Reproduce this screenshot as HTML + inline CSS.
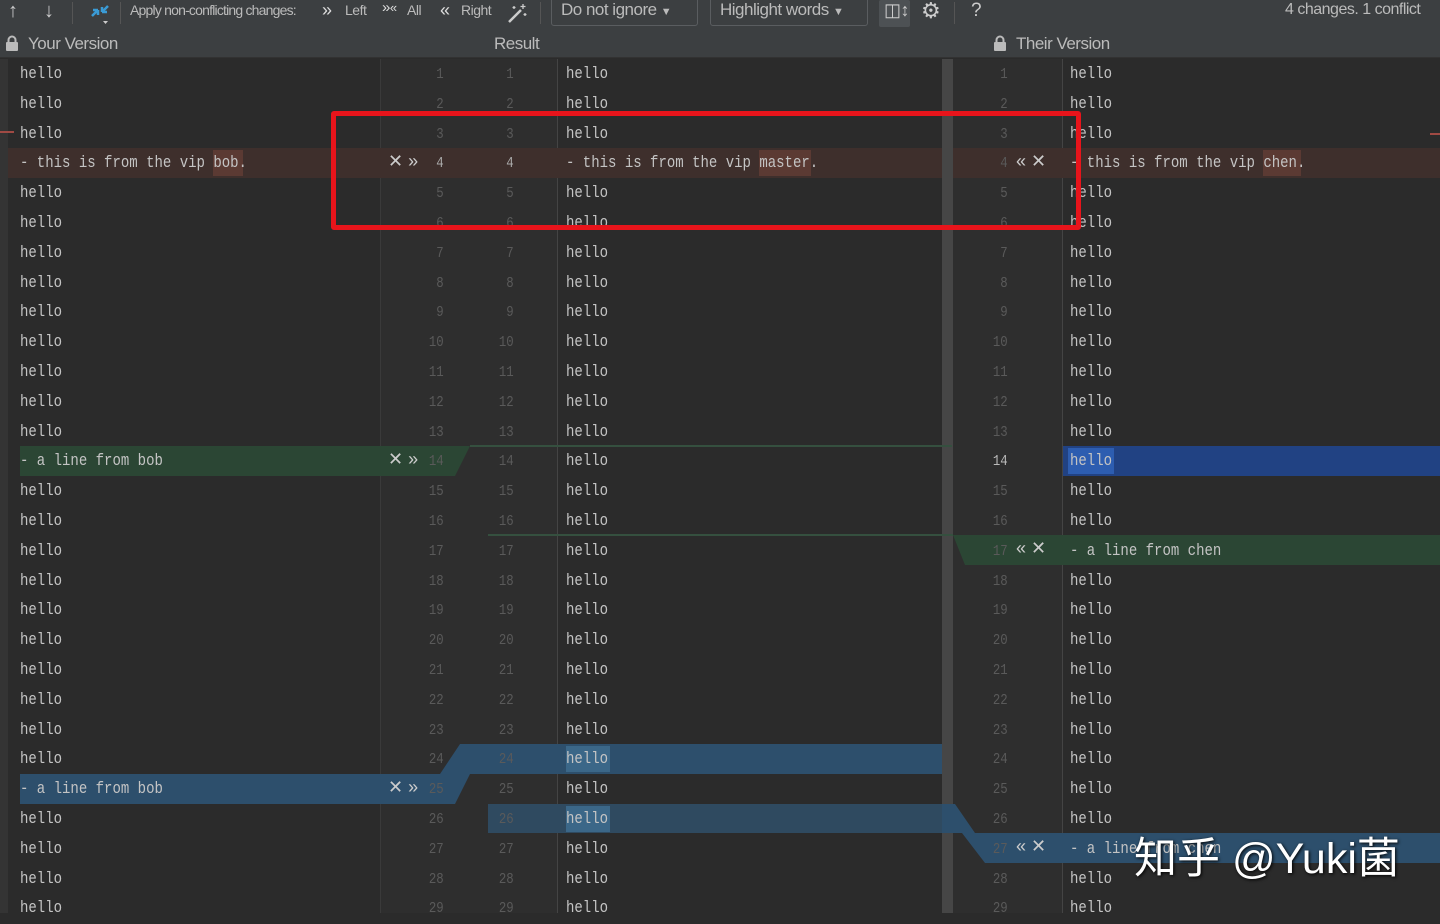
<!DOCTYPE html>
<html><head><meta charset="utf-8"><style>
*{margin:0;padding:0;box-sizing:border-box}
body{width:1440px;height:913px;overflow:hidden;background:#2b2b2b;position:relative;font-family:"Liberation Sans",sans-serif;color:#bbb}
.a{position:absolute}
pre{position:absolute;font-family:"Liberation Mono",monospace;font-size:17px;line-height:29.8px;color:#c4c4c4;margin:0;transform:scaleX(0.824);transform-origin:0 0;white-space:pre}
.n{color:#5a5a5a;text-align:right;font-size:15px}
.tb{font-size:15px;color:#bbb;letter-spacing:-0.5px}
.w{background:#5b3a33}
</style></head><body>
<div class="a" style="left:0;top:0;width:1440px;height:28px;background:#3c3f41"></div>
<div class="a" style="left:0;top:28px;width:1440px;height:30px;background:#3c3f41;border-bottom:1px solid #323232"></div>
<div class="a tb" style="left:8px;top:0;font-size:20px;color:#ccc">↑</div>
<div class="a tb" style="left:44px;top:0;font-size:20px;color:#ccc">↓</div>
<div class="a" style="left:72px;top:2px;width:1px;height:22px;background:#555"></div>
<svg class="a" style="left:88px;top:2px" width="24" height="24"><path d="M4 14 L10 8 M10 8 h-5 M10 8 v5" stroke="#3a9bd5" stroke-width="2.5" fill="none"/><path d="M20 4 L14 10 M14 10 h5 M14 10 v-5" stroke="#3a9bd5" stroke-width="2.5" fill="none"/><path d="M15 19 h5 l-2.5 3z" fill="#ccc"/></svg>
<div class="a" style="left:120px;top:2px;width:1px;height:22px;background:#555"></div>
<div class="a tb" style="left:130px;top:2px;font-size:14px;letter-spacing:-0.8px">Apply non-conflicting changes:</div>
<div class="a tb" style="left:322px;top:0;font-size:18px;color:#ddd">»</div>
<div class="a tb" style="left:345px;top:2px;font-size:14px">Left</div>
<div class="a tb" style="left:382px;top:-1px;font-size:15px;color:#ddd">»<span style="font-size:13px">«</span></div>
<div class="a tb" style="left:407px;top:2px;font-size:14px">All</div>
<div class="a tb" style="left:440px;top:0;font-size:18px;color:#ddd">«</div>
<div class="a tb" style="left:461px;top:2px;font-size:14px">Right</div>
<svg class="a" style="left:506px;top:2px" width="22" height="22"><path d="M3 20 L15 8" stroke="#ccc" stroke-width="2.5"/><path d="M17 2 v5 M14.5 4.5 h5 M8 4 v3 M6.5 5.5 h3 M19 11 v3 M17.5 12.5 h3" stroke="#ccc" stroke-width="1.3"/></svg>
<div class="a" style="left:540px;top:2px;width:1px;height:22px;background:#555"></div>
<div class="a" style="left:551px;top:-4px;width:147px;height:30px;border:1px solid #5a5d60;border-radius:3px"></div>
<div class="a tb" style="left:561px;top:0;font-size:17px">Do not ignore <span style="font-size:11px">▼</span></div>
<div class="a" style="left:710px;top:-4px;width:158px;height:30px;border:1px solid #5a5d60;border-radius:3px"></div>
<div class="a tb" style="left:720px;top:0;font-size:17px">Highlight words <span style="font-size:11px">▼</span></div>
<div class="a" style="left:879px;top:0;width:31px;height:27px;background:#4d5154;border-radius:2px"></div>
<div class="a tb" style="left:884px;top:0;font-size:18px;color:#ccc">◫↕</div>
<div class="a tb" style="left:921px;top:-2px;font-size:22px;color:#ccc">⚙</div>
<div class="a" style="left:954px;top:2px;width:1px;height:22px;background:#555"></div>
<div class="a tb" style="left:971px;top:0;font-size:19px;color:#ccc">?</div>
<div class="a tb" style="left:1285px;top:1px;font-size:16px;white-space:nowrap">4 changes. 1 conflict</div>
<svg class="a" style="left:5px;top:35px" width="14" height="16"><rect x="1" y="7" width="12" height="9" rx="1" fill="#bbb"/><path d="M3.5 7 V5 a3.5 3.5 0 0 1 7 0 V7" stroke="#bbb" stroke-width="2" fill="none"/></svg>
<div class="a tb" style="left:28px;top:34px;font-size:17px">Your Version</div>
<div class="a tb" style="left:494px;top:34px;font-size:17px">Result</div>
<svg class="a" style="left:993px;top:35px" width="14" height="16"><rect x="1" y="7" width="12" height="9" rx="1" fill="#bbb"/><path d="M3.5 7 V5 a3.5 3.5 0 0 1 7 0 V7" stroke="#bbb" stroke-width="2" fill="none"/></svg>
<div class="a tb" style="left:1016px;top:34px;font-size:17px">Their Version</div>
<div class="a" style="left:0;top:59px;width:8px;height:854px;background:#343434"></div>
<div class="a" style="left:380px;top:59px;width:178px;height:854px;background:#2e2e2e;border-left:1px solid #3a3a3a"></div>
<div class="a" style="left:557px;top:59px;width:1px;height:854px;background:#444"></div>
<div class="a" style="left:942px;top:59px;width:11px;height:854px;background:#464646"></div>
<div class="a" style="left:953px;top:59px;width:109px;height:854px;background:#2e2e2e"></div>
<div class="a" style="left:1062px;top:59px;width:1px;height:854px;background:#444"></div>
<div class="a" style="left:0;top:131px;width:14px;height:2px;background:#a04a44"></div>
<div class="a" style="left:1430px;top:133px;width:10px;height:2px;background:#a04a44"></div>
<div class="a" style="left:8px;top:148px;width:372px;height:30px;background:#3e2f2c"></div>
<div class="a" style="left:380px;top:148px;width:562px;height:30px;background:#3e2f2c"></div>
<div class="a" style="left:953px;top:148px;width:487px;height:30px;background:#3e2f2c"></div>
<div class="a w" style="left:213px;top:150px;width:30px;height:26px"></div>
<div class="a w" style="left:759px;top:150px;width:52px;height:26px"></div>
<div class="a w" style="left:1263px;top:150px;width:38px;height:26px"></div>
<svg class="a" style="left:0;top:0" width="1440" height="913">
<polygon points="20,446 470,446 455,476 20,476" fill="#2b4634"/>
<line x1="470" y1="446" x2="952" y2="446" stroke="#35503f" stroke-width="2"/>
<polygon points="953,535 1440,535 1440,565 965,565" fill="#2b4634"/>
<line x1="488" y1="535" x2="953" y2="535" stroke="#35503f" stroke-width="2"/>
<polygon points="20,774 440,774 460,744 942,744 942,774 470,774 455,804 20,804" fill="#2d4f6c"/>
<polygon points="488,804 942,804 942,833 488,833" fill="#2f4a60"/>
<polygon points="942,804 955,804 975,833 1440,833 1440,863 985,863 962,833 942,833" fill="#2d4f6c"/>
<rect x="488" y="744" width="70" height="30" fill="#2d4f6c"/>
<rect x="566" y="746" width="44" height="26" fill="#3b6788"/>
<rect x="566" y="806" width="44" height="26" fill="#3b6788"/>
<rect x="1063" y="446" width="377" height="30" fill="#214283"/>
<rect x="1068" y="448" width="46" height="26" fill="#2d5db0"/>
</svg>
<pre style="left:20px;top:60px">hello
hello
hello
- this is from the vip bob.
hello
hello
hello
hello
hello
hello
hello
hello
hello
- a line from bob
hello
hello
hello
hello
hello
hello
hello
hello
hello
hello
- a line from bob
hello
hello
hello
hello</pre>
<pre class="n" style="left:414px;top:60px;width:36px">1
2
3
<span style="color:#aaa">4</span>
5
6
7
8
9
10
11
12
13
14
15
16
17
18
19
20
21
22
23
24
25
26
27
28
29</pre>
<pre class="n" style="left:484px;top:60px;width:36px">1
2
3
<span style="color:#aaa">4</span>
5
6
7
8
9
10
11
12
13
14
15
16
17
18
19
20
21
22
23
24
25
26
27
28
29</pre>
<pre style="left:566px;top:60px">hello
hello
hello
- this is from the vip master.
hello
hello
hello
hello
hello
hello
hello
hello
hello
hello
hello
hello
hello
hello
hello
hello
hello
hello
hello
hello
hello
hello
hello
hello
hello</pre>
<pre class="n" style="left:978px;top:60px;width:36px">1
2
3
4
5
6
7
8
9
10
11
12
13
<span style="color:#bbb">14</span>
15
16
17
18
19
20
21
22
23
24
25
26
27
28
29</pre>
<pre style="left:1070px;top:60px">hello
hello
hello
- this is from the vip chen.
hello
hello
hello
hello
hello
hello
hello
hello
hello
hello
hello
hello
- a line from chen
hello
hello
hello
hello
hello
hello
hello
hello
hello
- a line from chen
hello
hello</pre>
<div class="a" style="left:388px;top:151px;font-size:18px;color:#ccc">✕ »</div>
<div class="a" style="left:388px;top:449px;font-size:18px;color:#ccc">✕ »</div>
<div class="a" style="left:388px;top:777px;font-size:18px;color:#ccc">✕ »</div>
<div class="a" style="left:1016px;top:151px;font-size:18px;color:#ccc">« ✕</div>
<div class="a" style="left:1016px;top:538px;font-size:18px;color:#ccc">« ✕</div>
<div class="a" style="left:1016px;top:836px;font-size:18px;color:#ccc">« ✕</div>
<div class="a" style="left:331px;top:111px;width:750px;height:119px;border:5px solid #e8141b;border-radius:3px"></div>
<div class="a" style="left:1134px;top:824px;font-family:'Liberation Sans','Noto Sans CJK SC',sans-serif;font-size:43px;color:#fff;text-shadow:1px 1px 3px #000;white-space:nowrap">知乎 @Yuki菌</div>
</body></html>
